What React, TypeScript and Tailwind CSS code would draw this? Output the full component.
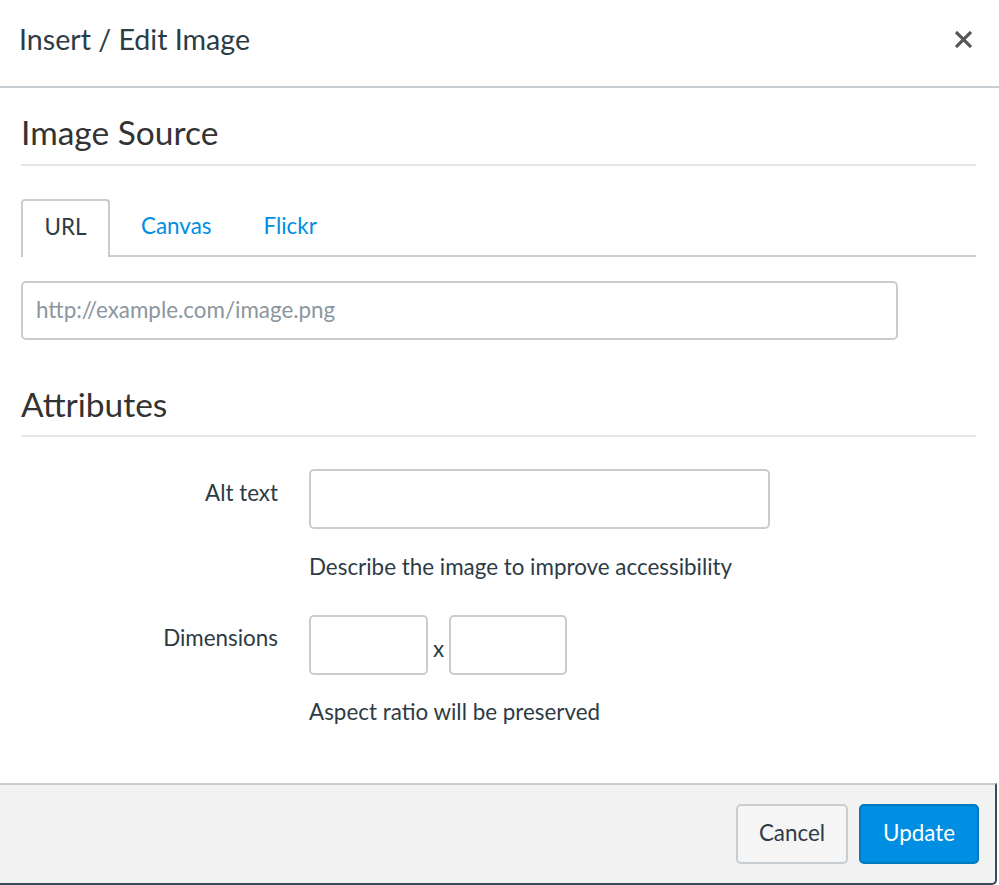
import { useState } from "react";

const font = { fontFamily: "Lato, 'Noto Sans', sans-serif" };

function CloseIcon() {
  return (
    <svg width="17" height="17" viewBox="0 0 16 16" aria-hidden="true">
      <path d="M2 2 L14 14 M14 2 L2 14" stroke="#565656" strokeWidth="3" strokeLinecap="square" />
    </svg>
  );
}

export default function App() {
  const [tab, setTab] = useState("URL");
  const tabs = ["URL", "Canvas", "Flickr"];

  return (
    <div style={font} className="flex h-[885px] w-[999px] flex-col bg-white text-[#2d3b45]">
      {/* header */}
      <div className="flex h-[88px] shrink-0 items-center justify-between border-b-2 border-[#c7cdd1] pb-[7px] pl-[19px] pr-[20px]">
        <h1 className="text-[28.6px] font-normal leading-none">Insert / Edit Image</h1>
        <button className="flex h-8 w-8 items-center justify-center">
          <CloseIcon />
        </button>
      </div>

      {/* body */}
      <div className="flex-1 pl-[21px] pr-[23px]">
        <h2 className="mt-[27px] pb-[15px] text-[33.5px] leading-[34px] text-[#333] border-b-2 border-[#e6e6e6]">Image Source</h2>

        <div className="mt-[34px] flex h-[57px] items-end border-b-2 border-[#c7cdd1]">
          {tabs.map((t, i) =>
            t === tab ? (
              <button
                key={t}
                onClick={() => setTab(t)}
                className="-mb-[2px] flex h-[58px] w-[89px] items-center justify-center rounded-t-[4px] border-2 border-b-0 border-[#c7cdd1] bg-white pb-[4px] text-[22.4px] text-[#2d3b45]"
              >
                {t}
              </button>
            ) : (
              <button
                key={t}
                onClick={() => setTab(t)}
                className={`flex h-[56px] items-center px-[26px] pb-[2px] text-[22.4px] text-[#008ee2] ${i === 1 ? "ml-[5px]" : ""}`}
              >
                {t}
              </button>
            )
          )}
        </div>

        <input
          placeholder="http://example.com/image.png"
          className="mt-[24px] block h-[59px] w-[877px] rounded-[5px] border-2 border-[#c7cdd1] px-[13px] pb-[3px] text-[22.4px] text-[#2d3b45] placeholder:text-[#8b969e] outline-none"
          style={font}
        />

        <h2 className="mt-[47px] pb-[14px] text-[33.5px] leading-[34px] text-[#333] border-b-2 border-[#e6e6e6]">Attributes</h2>

        <div className="mt-[32px] grid grid-cols-[257px_1fr] gap-x-[31px]">
          <label className="pt-[11px] text-right text-[22.4px] leading-[26px]">Alt text</label>
          <div>
            <input className="block h-[60px] w-[461px] rounded-[5px] border-2 border-[#c7cdd1] outline-none" />
            <p className="mt-[25px] text-[22.4px] leading-[26px]">Describe the image to improve accessibility</p>
          </div>

          <label className="mt-[35px] pt-[10px] text-right text-[22.4px] leading-[26px]">Dimensions</label>
          <div className="mt-[35px]">
            <div className="flex items-center">
              <input className="block h-[60px] w-[119px] rounded-[5px] border-2 border-[#c7cdd1] outline-none" />
              <span className="mx-[5px] mt-[8px] text-[22.4px] leading-[26px]">x</span>
              <input className="block h-[60px] w-[118px] rounded-[5px] border-2 border-[#c7cdd1] outline-none" />
            </div>
            <p className="mt-[24px] text-[22.4px] leading-[26px]">Aspect ratio will be preserved</p>
          </div>
        </div>
      </div>

      {/* footer */}
      <div className="flex h-[102px] w-[997px] shrink-0 items-center justify-end gap-[11px] rounded-br-[5px] border-t-2 border-r-2 border-b-2 border-t-[#c7cdd1] border-r-[#394b58] border-b-[#394b58] bg-[#f2f2f2] pr-[16px]">
        <button className="h-[60px] w-[112px] rounded-[5px] border-2 border-[#c7cdd1] bg-[#f5f5f5] pb-[2px] text-[22.4px] text-[#2d3b45]">
          Cancel
        </button>
        <button className="h-[60px] w-[120px] rounded-[5px] border-2 border-[#0079c1] bg-[#008ee2] pb-[2px] text-[22.4px] text-white">
          Update
        </button>
      </div>
    </div>
  );
}
